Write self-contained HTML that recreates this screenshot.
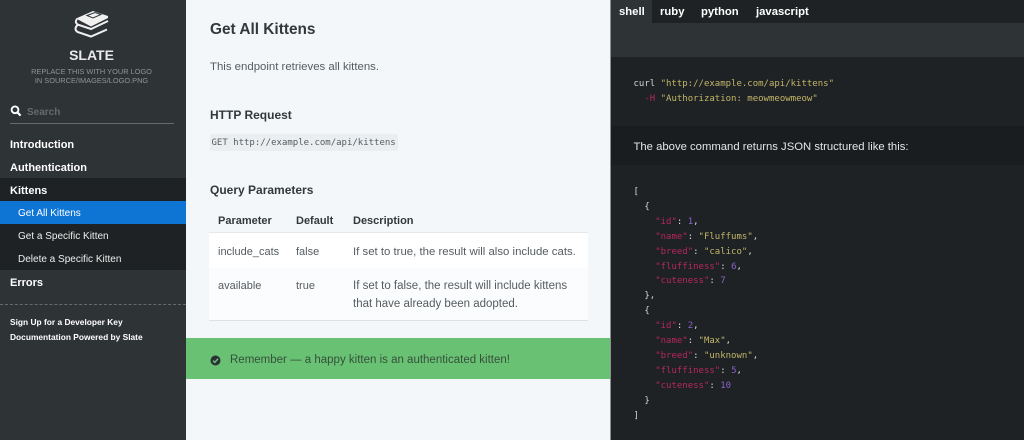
<!DOCTYPE html>
<html><head><meta charset="utf-8"><title>Slate</title>
<style>
html,body{margin:0;padding:0;width:1024px;height:440px;overflow:hidden;background:#f3f7f9;font-family:"Liberation Sans",sans-serif}
.b{position:absolute}
.t{position:absolute;white-space:nowrap;line-height:16px}
.side{color:#fff;font-weight:bold;font-size:11px;left:10px}
.sub{color:#eee;font-size:10px;left:18px}
.m{color:#555c60;font-size:12px;left:0}
.h{color:#33383b;font-weight:bold}
pre{position:absolute;margin:0;font-family:"DejaVu Sans Mono","Liberation Mono",monospace;font-size:9px;line-height:14.8px;color:#d5d7d8;left:633.5px}
i{font-style:normal}.r{color:#b5285e}.y{color:#c3b66a}.p{color:#8a63c9}
</style></head><body>
<div class="b" style="left:0;top:0;width:186px;height:440px;background:#2e3336"></div>
<svg class="b" style="left:70px;top:5px" width="44" height="36" viewBox="70 5 44 36"><path d="M76 18.5L93 11L108 16L108 18L91 26.5Z" fill="#f0f0f0"/><path d="M87 15.5L95 12.5L101 14.5L93 18Z" fill="none" stroke="#2e3336" stroke-width="1"/><path d="M77 19Q74.5 22 77.5 24.5L91 29L108 21M77.5 25Q73.5 29 77.5 32L91 36.5L107 29.5" fill="none" stroke="#f0f0f0" stroke-width="2"/></svg>
<div class="t" style="left:0;width:183px;text-align:center;top:47px;color:#eaeaea;font-size:14px;font-weight:bold">SLATE</div>
<div class="t" style="left:0;width:183px;text-align:center;top:67px;color:#8f9496;font-size:7.4px;line-height:9px;">REPLACE THIS WITH YOUR LOGO<br>IN SOURCE/IMAGES/LOGO.PNG</div>
<svg class="b" style="left:10px;top:105px" width="12" height="12" viewBox="0 0 12 12"><circle cx="5" cy="4.8" r="3.4" fill="none" stroke="#fff" stroke-width="1.9"/><path d="M7.5 7.5L10.6 10.6" stroke="#fff" stroke-width="2.2"/></svg>
<div class="t" style="left:27px;top:105px;color:#666b6e;font-size:10px;font-weight:bold">Search</div>
<div class="b" style="left:10px;top:122.5px;width:164px;height:1px;background:#666b6e"></div>
<div class="t side" style="top:137px">Introduction</div>
<div class="t side" style="top:160px">Authentication</div>
<div class="b" style="left:0;top:178px;width:186px;height:92px;background:#1e2224"></div>
<div class="t side" style="top:183px">Kittens</div>
<div class="b" style="left:0;top:201px;width:186px;height:23px;background:#0f75d4"></div>
<div class="t sub" style="top:206px;color:#fff">Get All Kittens</div>
<div class="t sub" style="top:229px">Get a Specific Kitten</div>
<div class="t sub" style="top:252px">Delete a Specific Kitten</div>
<div class="t side" style="top:275px">Errors</div>
<div class="b" style="left:0;top:304px;width:186px;border-top:1px dashed #666b6e"></div>
<div class="t" style="left:10px;top:315px;color:#fff;font-size:8.4px;font-weight:bold;line-height:14px">Sign Up for a Developer Key</div>
<div class="t" style="left:10px;top:330px;color:#fff;font-size:8.4px;font-weight:bold;line-height:14px">Documentation Powered by Slate</div>

<div class="t h" style="left:210px;top:22px;font-size:15.4px">Get All Kittens</div>
<div class="t m" style="left:210px;top:59px;font-size:11.4px">This endpoint retrieves all kittens.</div>
<div class="t h" style="left:210px;top:107px;font-size:12px">HTTP Request</div>
<div class="b" style="left:209.5px;top:134px;width:188.5px;height:17px;background:#ebeef0;border-radius:2px"></div>
<div class="t" style="left:211.5px;top:135px;font:9px/16px 'DejaVu Sans Mono',monospace;color:#555c60">GET http://example.com/api/kittens</div>
<div class="t h" style="left:210px;top:182px;font-size:12px">Query Parameters</div>
<div class="b" style="left:209px;top:232px;width:379px;height:88px;background:#fbfcfd;border-bottom:1px solid #dfe2e4"></div>
<div class="b" style="left:209px;top:232px;width:379px;height:36px;background:#fff;border-top:1px solid #e6e9eb;box-sizing:border-box"></div>
<div class="t h" style="left:218px;top:213px;font-size:11px">Parameter</div>
<div class="t h" style="left:296px;top:213px;font-size:11px">Default</div>
<div class="t h" style="left:353px;top:213px;font-size:11px">Description</div>
<div class="t m" style="left:218px;top:244px;font-size:11px">include_cats</div>
<div class="t m" style="left:296px;top:244px;font-size:11px">false</div>
<div class="t m" style="left:353px;top:244px;font-size:11.4px">If set to true, the result will also include cats.</div>
<div class="t m" style="left:218px;top:278px;font-size:11px">available</div>
<div class="t m" style="left:296px;top:278px;font-size:11px">true</div>
<div class="t m" style="left:353px;top:278px;font-size:11.5px">If set to false, the result will include kittens</div>
<div class="t m" style="left:353px;top:296px;font-size:11.5px">that have already been adopted.</div>
<div class="b" style="left:186px;top:338px;width:425px;height:41px;background:#69c173"></div>
<svg class="b" style="left:209.5px;top:354.5px" width="11" height="11" viewBox="0 0 11 11"><circle cx="5.5" cy="5.5" r="5" fill="#2c3134"/><path d="M3 5.6L4.8 7.4L8 3.8" fill="none" stroke="#69c173" stroke-width="1.5"/></svg>
<div class="t" style="left:230px;top:352px;font-size:11.5px;color:#35503b">Remember — a happy kitten is an authenticated kitten!</div>

<div class="b" style="left:610px;top:0;width:1px;height:440px;background:#8a8f92"></div>
<div class="b" style="left:611px;top:0;width:413px;height:440px;background:#1e2224"></div>
<div class="b" style="left:611px;top:0;width:41px;height:23px;background:#2e3336"></div>
<div class="b" style="left:611px;top:23px;width:413px;height:34px;background:#2e3336"></div>
<div class="b" style="left:611px;top:126px;width:413px;height:39px;background:#1a1d1f"></div>
<div class="t" style="left:619px;top:4px;font-size:11.3px;font-weight:bold;color:#fff">shell</div>
<div class="t" style="left:660px;top:4px;font-size:11.3px;font-weight:bold;color:#fff">ruby</div>
<div class="t" style="left:701px;top:4px;font-size:11.3px;font-weight:bold;color:#fff">python</div>
<div class="t" style="left:756px;top:4px;font-size:11.3px;font-weight:bold;color:#fff">javascript</div>
<pre style="top:77px">curl <i class="y">"http://example.com/api/kittens"</i>
  <i class="r">-H</i> <i class="y">"Authorization: meowmeowmeow"</i></pre>
<div class="t" style="left:633.5px;top:139px;font-size:11.3px;color:#e4e5e6">The above command returns JSON structured like this:</div>
<pre style="top:185px;line-height:14.9px">[
  {
    <i class="r">"id"</i>: <i class="p">1</i>,
    <i class="r">"name"</i>: <i class="y">"Fluffums"</i>,
    <i class="r">"breed"</i>: <i class="y">"calico"</i>,
    <i class="r">"fluffiness"</i>: <i class="p">6</i>,
    <i class="r">"cuteness"</i>: <i class="p">7</i>
  },
  {
    <i class="r">"id"</i>: <i class="p">2</i>,
    <i class="r">"name"</i>: <i class="y">"Max"</i>,
    <i class="r">"breed"</i>: <i class="y">"unknown"</i>,
    <i class="r">"fluffiness"</i>: <i class="p">5</i>,
    <i class="r">"cuteness"</i>: <i class="p">10</i>
  }
]</pre>
</body></html>
